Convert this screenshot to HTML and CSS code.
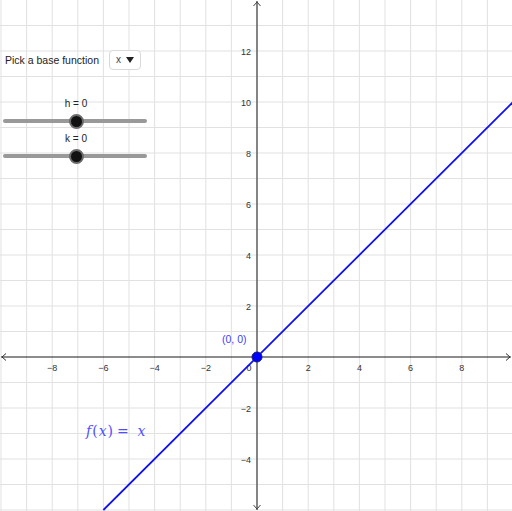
FILE: index.html
```html
<!DOCTYPE html>
<html>
<head>
<meta charset="utf-8">
<link rel="stylesheet" href="styles.css">
</head>
<body>
<div class="app">
  <svg class="canvas" width="512" height="511" viewBox="0 0 512 511" xmlns="http://www.w3.org/2000/svg">
    <g class="grid" stroke="#e1e1e1" stroke-width="1">
      <line x1="1" y1="0" x2="1" y2="511"/>
      <line x1="26.6" y1="0" x2="26.6" y2="511"/>
      <line x1="52.2" y1="0" x2="52.2" y2="511"/>
      <line x1="77.8" y1="0" x2="77.8" y2="511"/>
      <line x1="103.4" y1="0" x2="103.4" y2="511"/>
      <line x1="129" y1="0" x2="129" y2="511"/>
      <line x1="154.6" y1="0" x2="154.6" y2="511"/>
      <line x1="180.2" y1="0" x2="180.2" y2="511"/>
      <line x1="205.8" y1="0" x2="205.8" y2="511"/>
      <line x1="231.4" y1="0" x2="231.4" y2="511"/>
      <line x1="282.6" y1="0" x2="282.6" y2="511"/>
      <line x1="308.2" y1="0" x2="308.2" y2="511"/>
      <line x1="333.8" y1="0" x2="333.8" y2="511"/>
      <line x1="359.4" y1="0" x2="359.4" y2="511"/>
      <line x1="385" y1="0" x2="385" y2="511"/>
      <line x1="410.6" y1="0" x2="410.6" y2="511"/>
      <line x1="436.2" y1="0" x2="436.2" y2="511"/>
      <line x1="461.8" y1="0" x2="461.8" y2="511"/>
      <line x1="487.4" y1="0" x2="487.4" y2="511"/>
      <line x1="0" y1="25.5" x2="512" y2="25.5"/>
      <line x1="0" y1="51" x2="512" y2="51"/>
      <line x1="0" y1="76.5" x2="512" y2="76.5"/>
      <line x1="0" y1="102" x2="512" y2="102"/>
      <line x1="0" y1="127.5" x2="512" y2="127.5"/>
      <line x1="0" y1="153" x2="512" y2="153"/>
      <line x1="0" y1="178.5" x2="512" y2="178.5"/>
      <line x1="0" y1="204" x2="512" y2="204"/>
      <line x1="0" y1="229.5" x2="512" y2="229.5"/>
      <line x1="0" y1="255" x2="512" y2="255"/>
      <line x1="0" y1="280.5" x2="512" y2="280.5"/>
      <line x1="0" y1="306" x2="512" y2="306"/>
      <line x1="0" y1="331.5" x2="512" y2="331.5"/>
      <line x1="0" y1="382.5" x2="512" y2="382.5"/>
      <line x1="0" y1="408" x2="512" y2="408"/>
      <line x1="0" y1="433.5" x2="512" y2="433.5"/>
      <line x1="0" y1="459" x2="512" y2="459"/>
      <line x1="0" y1="484.5" x2="512" y2="484.5"/>
      <line x1="0" y1="510" x2="512" y2="510"/>
    </g>
    <g class="axes" fill="none">
      <line x1="257" y1="1" x2="257" y2="510" stroke="#666" stroke-width="1.6"/>
      <polyline points="253.5,6 257,2 260.5,6" stroke="#444" stroke-width="1"/>
      <polyline points="253.5,505 257,509 260.5,505" stroke="#444" stroke-width="1"/>
      <line x1="1" y1="357" x2="511" y2="357" stroke="#1a1a1a" stroke-width="1.2"/>
      <polyline points="6,353.5 2,357 6,360.5" stroke="#333" stroke-width="1"/>
      <polyline points="506,353.5 510,357 506,360.5" stroke="#333" stroke-width="1"/>
    </g>
    <g class="ticks">
      <text x="52.2" y="371" text-anchor="middle">−8</text>
      <text x="103.4" y="371" text-anchor="middle">−6</text>
      <text x="154.6" y="371" text-anchor="middle">−4</text>
      <text x="205.8" y="371" text-anchor="middle">−2</text>
      <text x="249" y="371" text-anchor="middle">0</text>
      <text x="308.2" y="371" text-anchor="middle">2</text>
      <text x="359.4" y="371" text-anchor="middle">4</text>
      <text x="410.6" y="371" text-anchor="middle">6</text>
      <text x="461.8" y="371" text-anchor="middle">8</text>
      <text x="251" y="54.5" text-anchor="end">12</text>
      <text x="251" y="105.5" text-anchor="end">10</text>
      <text x="251" y="156.5" text-anchor="end">8</text>
      <text x="251" y="207.5" text-anchor="end">6</text>
      <text x="251" y="258.5" text-anchor="end">4</text>
      <text x="251" y="309.5" text-anchor="end">2</text>
      <text x="251" y="411.5" text-anchor="end">−2</text>
      <text x="251" y="462.5" text-anchor="end">−4</text>
    </g>
    <line class="fline" x1="103.4" y1="510" x2="513" y2="102" stroke="#1010f0" stroke-width="1.8"/>
    <circle cx="257" cy="357" r="5" fill="#0000ff" stroke="#1a1a66" stroke-width="1"/>
    <text class="ptlabel" x="222" y="343">(0, 0)</text>
    <g class="flabel">
      <text x="86" y="435.5" class="fx">f<tspan class="up">(</tspan>x<tspan class="up">)</tspan></text>
      <text x="117" y="435.5" class="up">=</text>
      <text x="137.5" y="435.5">x</text>
    </g>
  </svg>
  <div class="panel">
    <div class="row">
      <span class="label">Pick a base function</span>
      <div class="select"><span class="val">x</span><span class="caret"></span></div>
    </div>
    <div class="slider first">
      <div class="slabel">h = 0</div>
      <div class="track"><div class="knob" style="left: 50%"></div></div>
    </div>
    <div class="slider">
      <div class="slabel">k = 0</div>
      <div class="track"><div class="knob" style="left: 50%"></div></div>
    </div>
  </div>
</div>
</body>
</html>
```
FILE: styles.css
```css
html, body {
  margin: 0;
  padding: 0;
  background: #ffffff;
}
.app {
  position: relative;
  width: 512px;
  height: 511px;
  overflow: hidden;
  font-family: "Liberation Sans", Arial, sans-serif;
}
.canvas {
  position: absolute;
  left: 0;
  top: 0;
  display: block;
}
.ticks text {
  font-family: "Liberation Sans", Arial, sans-serif;
  font-size: 9px;
  fill: #333333;
}
.ptlabel {
  font-family: "Liberation Sans", Arial, sans-serif;
  font-size: 10.5px;
  fill: #3c3cff;
}
.flabel text {
  font-family: "DejaVu Serif", "Liberation Serif", serif;
  font-style: italic;
  font-size: 14px;
  fill: #5050ff;
}
.flabel .fx {
  letter-spacing: 1px;
}
.flabel .up {
  font-style: normal;
}
.panel {
  position: absolute;
  left: 0;
  top: 49px;
  width: 160px;
  display: flex;
  flex-direction: column;
}
.row {
  display: flex;
  align-items: center;
  height: 22px;
  padding-left: 5px;
}
.label {
  font-size: 10.5px;
  color: #222;
}
.select {
  margin-left: 10px;
  width: 32px;
  height: 20px;
  box-sizing: border-box;
  border: 1px solid #d9d9d9;
  border-radius: 4px;
  background: #fff;
  display: flex;
  align-items: center;
  justify-content: center;
  gap: 5px;
}
.val {
  font-size: 10px;
  color: #444;
  line-height: 1;
}
.caret {
  width: 0;
  height: 0;
  border-left: 4.5px solid transparent;
  border-right: 4.5px solid transparent;
  border-top: 6px solid #222;
}
.slider {
  display: flex;
  flex-direction: column;
  align-items: stretch;
  width: 144px;
  margin-left: 3px;
  margin-top: 4px;
}
.slider.first {
  margin-top: 27px;
}
.slabel {
  font-size: 10px;
  line-height: 12px;
  text-align: center;
  color: #222;
  margin-bottom: 3px;
  padding-left: 2px;
}
.track {
  position: relative;
  height: 16px;
  display: flex;
  align-items: center;
}
.track::before {
  content: "";
  display: block;
  width: 100%;
  height: 4px;
  border-radius: 2px;
  background: #999999;
}
.knob {
  position: absolute;
  top: 50%;
  width: 11px;
  height: 11px;
  margin-left: -6.5px;
  margin-top: -7.5px;
  border-radius: 50%;
  background: #111;
  border: 2px solid #6b6b6b;
}
```
